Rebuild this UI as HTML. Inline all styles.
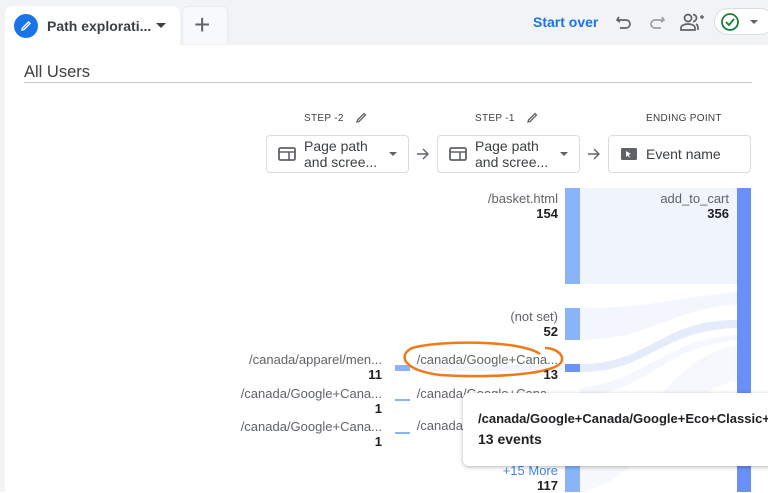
<!DOCTYPE html>
<html><head><style>
body{margin:0;width:768px;height:492px;overflow:hidden;background:#fff;font-family:"Liberation Sans",Arial,sans-serif;position:relative;color:#3c4043}
.a{position:absolute}
.r{text-align:right}
.lbl{font-size:13px;color:#5f6368;white-space:nowrap}
.num{font-size:13px;font-weight:bold;color:#202124}
.box{position:absolute;top:135px;height:36px;border:1px solid #dadce0;border-radius:4px;background:#fff;font-size:14px;color:#3c4043}
.sh{font-size:10px;color:#3c4043;letter-spacing:.3px}
</style></head><body>
<div class="a" style="left:0;top:0;width:768px;height:45px;background:#f1f3f4"></div>
<div class="a" style="left:0;top:45px;width:5px;height:447px;background:#f1f3f4"></div>
<div class="a" style="left:5px;top:6px;width:175px;height:50px;background:#fff;border-radius:8px 8px 0 0"></div>
<div class="a" style="left:182px;top:6px;width:46px;height:38px;background:#f8f9fa;border-radius:6px 6px 0 0;border:1px solid #e8eaed;border-bottom:none;box-sizing:border-box"></div>
<div class="a" style="left:194px;top:9px;font-size:28px;font-weight:300;color:#5f6368">+</div>
<div class="a" style="left:14px;top:14px;width:24px;height:24px;border-radius:50%;background:#1a73e8"></div>
<svg class="a" style="left:19px;top:19px" width="14" height="14" viewBox="0 0 14 14"><path d="M3 11 L3.5 9 L9.5 3 L11 4.5 L5 10.5 Z" fill="none" stroke="#fff" stroke-width="1.4"/></svg>
<div class="a" style="left:47px;top:18px;font-size:14px;font-weight:bold;color:#3c4043">Path explorati...</div>
<div class="a" style="left:156px;top:23px;border:5px solid transparent;border-top:5px solid #3c4043"></div>
<div class="a" style="left:533px;top:14px;font-size:14px;font-weight:bold;color:#1a73e8">Start over</div>
<svg class="a" style="left:614px;top:12px" width="20" height="20" viewBox="0 0 20 20"><path d="M5 5 L3 8 L6 10 M3 8 H12 a4 4 0 0 1 0 8 H6" fill="none" stroke="#5f6368" stroke-width="1.7"/></svg>
<svg class="a" style="left:647px;top:12px" width="20" height="20" viewBox="0 0 20 20"><path d="M15 5 L17 8 L14 10 M17 8 H8 a4 4 0 0 0 0 8 H14" fill="none" stroke="#9aa0a6" stroke-width="1.7"/></svg>
<svg class="a" style="left:679px;top:11px" width="26" height="22" viewBox="0 0 26 22"><circle cx="9" cy="7" r="3.5" fill="none" stroke="#5f6368" stroke-width="1.7"/><path d="M2 19 v-2 c0-3 4-4 7-4 s7 1 7 4 v2 Z" fill="none" stroke="#5f6368" stroke-width="1.7"/><path d="M14 3.5 a3.5 3.5 0 0 1 0 7 M17 13 c2 1 2 3 2 6" fill="none" stroke="#5f6368" stroke-width="1.7"/><path d="M21 6 h4 M23 4 v4" stroke="#5f6368" stroke-width="1.5"/></svg>
<div class="a" style="left:714px;top:8px;width:60px;height:27px;border:1px solid #dadce0;border-radius:14px;background:#fff;box-sizing:border-box"></div>
<svg class="a" style="left:720px;top:12px" width="20" height="20" viewBox="0 0 20 20"><circle cx="10" cy="10" r="8" fill="none" stroke="#188038" stroke-width="1.8"/><path d="M6 10 l3 3 l5 -6" fill="none" stroke="#188038" stroke-width="1.8"/></svg>
<div class="a" style="left:750px;top:20px;border:4px solid transparent;border-top:4px solid #5f6368"></div>
<div class="a" style="left:24px;top:63px;font-size:16.5px;color:#3c4043">All Users</div>
<div class="a" style="left:24px;top:82px;width:728px;height:1px;background:#c8c8c8"></div>

<div class="a sh" style="left:304px;top:113px">STEP -2</div>
<div class="a sh" style="left:475px;top:113px">STEP -1</div>
<div class="a sh" style="left:646px;top:113px">ENDING POINT</div>
<svg class="a" style="left:355px;top:111px" width="13" height="13" viewBox="0 0 13 13"><path d="M2 11 L2.5 9 L9 2.5 L10.5 4 L4 10.5 Z" fill="none" stroke="#5f6368" stroke-width="1.3"/></svg>
<svg class="a" style="left:526px;top:111px" width="13" height="13" viewBox="0 0 13 13"><path d="M2 11 L2.5 9 L9 2.5 L10.5 4 L4 10.5 Z" fill="none" stroke="#5f6368" stroke-width="1.3"/></svg>

<div class="box" style="left:266px;width:141px"><svg class="a" style="left:11px;top:11px" width="18" height="14"><rect x="1" y="1" width="16" height="12" rx="1.5" fill="none" stroke="#5f6368" stroke-width="1.8"/><path d="M1 5 H17 M11 5 V13" stroke="#5f6368" stroke-width="1.6"/></svg><div class="a" style="left:37px;top:2px;line-height:16px">Page path<br>and scree...</div><div class="a" style="left:122px;top:16px;border:4.5px solid transparent;border-top:4.5px solid #5f6368"></div></div>
<div class="box" style="left:437px;width:141px"><svg class="a" style="left:11px;top:11px" width="18" height="14"><rect x="1" y="1" width="16" height="12" rx="1.5" fill="none" stroke="#5f6368" stroke-width="1.8"/><path d="M1 5 H17 M11 5 V13" stroke="#5f6368" stroke-width="1.6"/></svg><div class="a" style="left:37px;top:2px;line-height:16px">Page path<br>and scree...</div><div class="a" style="left:122px;top:16px;border:4.5px solid transparent;border-top:4.5px solid #5f6368"></div></div>
<div class="box" style="left:608px;width:141px"><svg class="a" style="left:11px;top:11px" width="18" height="14"><rect x="1" y="1" width="16" height="12" rx="1.5" fill="#5f6368"/><path d="M6 4 L11 7 L8.5 7.8 L10 10 L9 10.5 L7.8 8.5 L6 10 Z" fill="#fff"/></svg><div class="a" style="left:37px;top:10px">Event name</div></div>
<svg class="a" style="left:416px;top:147px" width="14" height="14" viewBox="0 0 14 14"><path d="M1 7 H12 M7 2 L12 7 L7 12" fill="none" stroke="#5f6368" stroke-width="1.4"/></svg>
<svg class="a" style="left:587px;top:147px" width="14" height="14" viewBox="0 0 14 14"><path d="M1 7 H12 M7 2 L12 7 L7 12" fill="none" stroke="#5f6368" stroke-width="1.4"/></svg>

<svg class="a" style="left:0;top:0" width="768" height="492">
<rect x="580" y="188" width="157" height="96" fill="#f0f4fd"/>
<path d="M580 308 C650 308 660 300 737 292 V304 C660 312 650 340 580 340 Z" fill="#f3f6fd"/>
<path d="M580 364 C650 364 660 320 737 320 V328 C660 330 650 372 580 372 Z" fill="#e4ecfc"/>
<path d="M580 388 C650 380 660 340 737 335 V340 C660 348 650 392 580 396 Z" fill="#f4f7fd"/>
<path d="M580 465 C650 440 660 360 737 345 V380 C660 400 650 480 580 492 Z" fill="#f6f8fe"/>
<path d="M410 365 H565 V371 H410 Z" fill="#f3f6fd"/>
<rect x="565" y="188" width="15" height="96" fill="#8ab4f8"/>
<rect x="565" y="308" width="15" height="32" fill="#8ab4f8"/>
<rect x="565" y="364" width="15" height="8" fill="#6b93f5"/>
<rect x="565" y="462" width="15" height="30" fill="#8ab4f8"/>
<rect x="737" y="188" width="14" height="304" fill="#6a8ff7"/>
<rect x="395" y="365" width="15" height="6" fill="#8ab4f8"/>
<rect x="395" y="399" width="15" height="2" fill="#8ab4f8"/>
<rect x="395" y="432" width="15" height="2" fill="#8ab4f8"/>
<path d="M540 354 C520 340 440 340 412 348 C398 355 402 370 440 375 C490 378 560 375 562 360 C563 352 552 348 545 348" fill="none" stroke="#f07a1a" stroke-width="2.5"/>
</svg>

<div class="a lbl r" style="right:210px;top:191px">/basket.html</div>
<div class="a num r" style="right:210px;top:206px">154</div>
<div class="a lbl r" style="right:39px;top:191px">add_to_cart</div>
<div class="a num r" style="right:39px;top:206px">356</div>
<div class="a lbl r" style="right:210px;top:309px">(not set)</div>
<div class="a num r" style="right:210px;top:324px">52</div>
<div class="a lbl r" style="right:210px;top:352px">/canada/Google+Cana...</div>
<div class="a num r" style="right:210px;top:367px">13</div>
<div class="a lbl r" style="right:210px;top:386px">/canada/Google+Cana...</div>
<div class="a lbl r" style="right:210px;top:418px">/canada/Google+Cana...</div>
<div class="a lbl r" style="right:210px;top:463px;color:#4285f4">+15 More</div>
<div class="a num r" style="right:210px;top:478px">117</div>
<div class="a lbl r" style="right:386px;top:352px">/canada/apparel/men...</div>
<div class="a num r" style="right:386px;top:367px">11</div>
<div class="a lbl r" style="right:386px;top:386px">/canada/Google+Cana...</div>
<div class="a num r" style="right:386px;top:401px">1</div>
<div class="a lbl r" style="right:386px;top:419px">/canada/Google+Cana...</div>
<div class="a num r" style="right:386px;top:434px">1</div>

<div class="a" style="left:463px;top:393px;width:320px;height:73px;background:#fff;border-radius:6px;box-shadow:0 1px 4px rgba(0,0,0,.3)"></div>
<div class="a" style="left:478px;top:411px;font-size:13px;font-weight:bold;color:#202124;white-space:nowrap">/canada/Google+Canada/Google+Eco+Classic+T</div>
<div class="a" style="left:478px;top:431px;font-size:14px;font-weight:bold;color:#202124">13 events</div>
</body></html>
